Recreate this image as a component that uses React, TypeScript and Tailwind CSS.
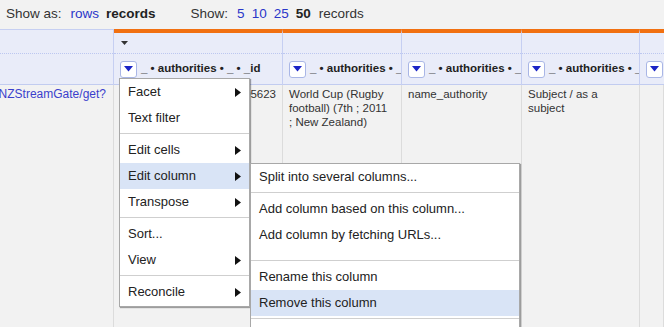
import React from "react";

type MenuItem = { label: string; sub?: boolean; active?: boolean } | "sep" | "gap";

const mainMenu: MenuItem[] = [
	{ label: "Facet", sub: true },
	{ label: "Text filter" },
	"sep",
	{ label: "Edit cells", sub: true },
	{ label: "Edit column", sub: true, active: true },
	{ label: "Transpose", sub: true },
	"sep",
	{ label: "Sort..." },
	{ label: "View", sub: true },
	"sep",
	{ label: "Reconcile", sub: true },
];

const editColumnMenu: MenuItem[] = [
	{ label: "Split into several columns..." },
	"sep",
	{ label: "Add column based on this column..." },
	{ label: "Add column by fetching URLs..." },
	"gap",
	"sep",
	{ label: "Rename this column" },
	{ label: "Remove this column", active: true },
	"sep",
	{ label: "Move column to beginning" },
	{ label: "Move column to end" },
];

const columns = [
	{ w: "w-[114px]", label: null, cell: "http://www.natlib.govt.nz/NZStreamGate/get?", link: true, right: true },
	{ w: "w-[169px]", label: "_ • authorities • _ • _id", cell: "http://id.loc.gov/authorities/sh2011005623", right: true },
	{ w: "w-[119px]", label: "_ • authorities • _ • name", cell: "World Cup (Rugby|football) (7th ; 2011|; New Zealand)" },
	{ w: "w-[120px]", label: "_ • authorities • _ • type", cell: "name_authority" },
	{ w: "w-[118px]", label: "_ • authorities • _ • role", cell: "Subject / as a subject" },
	{ w: "flex-1", label: "_ • authorities • _ • note", cell: "" },
];

function ColumnButton() {
	return (
		<span className="flex h-[17px] w-[17px] shrink-0 items-center justify-center rounded-[3px] border border-[#a9b6e6] bg-white">
			<svg width="9" height="6" viewBox="0 0 9 6">
				<path d="M0 0h9L4.5 5.5z" fill="#1b24c6" />
			</svg>
		</span>
	);
}

function Menu({ items, className }: { items: MenuItem[]; className: string }) {
	return (
		<div
			className={`absolute border border-[#a8a8a8] bg-white pb-px text-[13px] text-[#222] shadow-[1px_1px_1px_rgba(0,0,0,0.35)] ${className}`}
		>
			{items.map((item, i) => {
				if (item === "sep") return <div key={i} className="mt-[2px] mb-[3px] border-t border-[#cfcfcf]" />;
				if (item === "gap") return <div key={i} className="h-[10px]" />;
				return (
					<div
						key={i}
						className={`flex h-[26px] items-center justify-between pr-[8px] pl-[8px] ${item.active ? "bg-[#d9e4f6]" : ""}`}
					>
						<span className="whitespace-nowrap">{item.label}</span>
						{item.sub && (
							<svg width="6" height="9" viewBox="0 0 6 9">
								<path d="M0 0l6 4.5L0 9z" fill="#111" />
							</svg>
						)}
					</div>
				);
			})}
		</div>
	);
}

export default function App() {
	return (
		<div className="relative flex h-[327px] w-[664px] flex-col overflow-hidden bg-[#f2f2f2] font-['Liberation_Sans',Arial,sans-serif] text-[#333]">
			{/* view options */}
			<div className="flex h-[29px] shrink-0 items-center whitespace-nowrap pl-[6px] text-[13.5px] text-[#333]">
				<span>Show as:</span>
				<a className="ml-[9px] text-[#2a36c9]">rows</a>
				<b className="ml-[7px] text-[#222]">records</b>
				<span className="ml-[35px]">Show:</span>
				<a className="ml-[9px] text-[#2a36c9]">5</a>
				<a className="ml-[7px] text-[#2a36c9]">10</a>
				<a className="ml-[7px] text-[#2a36c9]">25</a>
				<b className="ml-[7px] text-[#222]">50</b>
				<span className="ml-[8px]">records</span>
			</div>

			{/* header */}
			<div className="flex shrink-0 bg-[#e9ecf9]">
				{columns.map((col, i) => (
					<div
						key={i}
						className={`${col.w} flex shrink-0 flex-col border-r border-[#c6cff2] ${
							i === 0 ? "border-t border-t-[#c6cff2]" : "border-t-4 border-t-[#f17011]"
						}`}
					>
						<div className={`flex items-center pl-[7px] ${i === 0 ? "h-[23px]" : "h-[20px]"}`}>
							{i === 1 && (
								<svg width="7" height="4" viewBox="0 0 7 4">
									<path d="M0 0h7L3.5 4z" fill="#333" />
								</svg>
							)}
						</div>
						<div className="border-t border-dotted border-[#bcc7f0]" />
						<div className="flex h-[31px] items-center gap-[4px] overflow-hidden border-b border-[#c2ccf0] pl-[6px]">
							{col.label && (
								<>
									<ColumnButton />
									<span className="whitespace-nowrap text-[11.5px] font-bold text-[#222]">{col.label}</span>
								</>
							)}
						</div>
					</div>
				))}
			</div>

			{/* records */}
			<div className="flex flex-1">
				{columns.map((col, i) => (
					<div
						key={i}
						className={`${col.w} shrink-0 overflow-hidden border-r border-[#dcdcdc] pt-[2px] pr-[6px] text-[11.5px] leading-[14px] ${
							i === 0 ? "pl-0 pr-[7px]" : "pl-[6px]"
						}`}
					>
						{col.right ? (
							<div className="flex justify-end overflow-hidden whitespace-nowrap">
								<span className={col.link ? "text-[12px] text-[#3b3fcc]" : "text-[#333]"}>{col.cell}</span>
							</div>
						) : (
							<div>
								{col.cell.split("|").map((line, j) => (
									<div key={j}>{line}</div>
								))}
							</div>
						)}
					</div>
				))}
			</div>

			<Menu items={mainMenu} className="left-[119px] top-[78px] w-[131px]" />
			<Menu items={editColumnMenu} className="left-[250px] top-[163px] w-[270px]" />
		</div>
	);
}
